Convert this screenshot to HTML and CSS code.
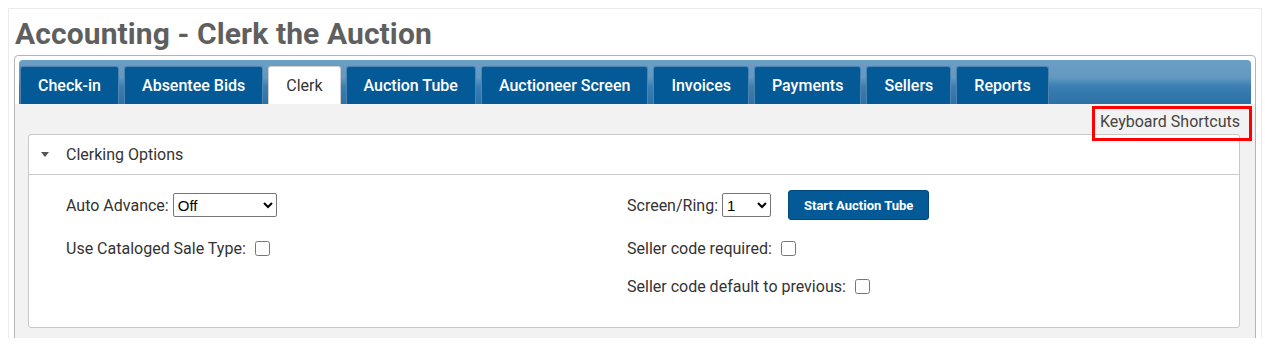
FILE: index.html
```html
<!DOCTYPE html>
<html lang="en">
<head>
    <meta charset="UTF-8">
    <meta name="viewport" content="width=device-width, initial-scale=1.0">
    <title>Accounting - Clerk the Auction</title>
    <link rel="stylesheet" href="styles.css">
</head>
<body>
    <div class="page">
        <h1>Accounting - Clerk the Auction</h1>
        <div class="tabs">
            <div class="tab-bar">
                <ul class="tab-nav">
                    <li><a href="#">Check-in</a></li>
                    <li><a href="#">Absentee Bids</a></li>
                    <li class="active"><a href="#">Clerk</a></li>
                    <li><a href="#">Auction Tube</a></li>
                    <li><a href="#">Auctioneer Screen</a></li>
                    <li><a href="#">Invoices</a></li>
                    <li><a href="#">Payments</a></li>
                    <li><a href="#">Sellers</a></li>
                    <li><a href="#">Reports</a></li>
                </ul>
            </div>
            <div class="tab-panel">
                <div class="shortcuts">
                    <a href="#" class="shortcuts-link">Keyboard Shortcuts</a>
                </div>
                <div class="options">
                    <div class="options-head">
                        <span class="caret"></span>
                        Clerking Options
                    </div>
                    <div class="options-body">
                        <div class="field">
                            <label for="auto-advance">Auto Advance:</label>
                            <select id="auto-advance" class="select-wide">
                                <option>Off</option>
                                <option>On</option>
                            </select>
                        </div>
                        <div class="field">
                            <label for="ring">Screen/Ring:</label>
                            <select id="ring" class="select-small">
                                <option>1</option>
                                <option>2</option>
                            </select>
                            <button class="btn">Start Auction Tube</button>
                        </div>
                        <div class="field">
                            <label for="cataloged">Use Cataloged Sale Type:</label>
                            <input type="checkbox" id="cataloged">
                        </div>
                        <div class="field">
                            <label for="seller-req">Seller code required:</label>
                            <input type="checkbox" id="seller-req">
                        </div>
                        <div class="field"></div>
                        <div class="field">
                            <label for="seller-prev">Seller code default to previous:</label>
                            <input type="checkbox" id="seller-prev">
                        </div>
                    </div>
                </div>
            </div>
        </div>
    </div>
</body>
</html>
```

FILE: styles.css
```css
body {
    margin: 8px 3px 8px 8px;
    font-family: Roboto, "Liberation Sans", Arial, sans-serif;
    font-size: 16px;
    color: #333333;
    background-color: #ffffff;
}
.page {
    box-sizing: border-box;
    height: 330px;
    border: 1px solid #ebebeb;
    border-bottom: none;
    padding: 8px 5px 0 5px;
    overflow: hidden;
}
h1 {
    margin: 0 0 4px 1px;
    font-size: 30px;
    line-height: 34px;
    font-weight: bold;
    letter-spacing: 0.1px;
    color: #5f5f5f;
}
.tabs {
    border: 1px solid #b5b5b5;
    border-radius: 4px;
    background-color: #ffffff;
}
.tab-bar {
    padding: 4px 4px 0 4px;
}
.tab-nav {
    list-style: none;
    margin: 0;
    padding: 6px 0 0 1px;
    display: flex;
    gap: 5px;
    border-radius: 4px 4px 0 0;
    background: linear-gradient(#6c9fc6 0%, #6398c0 40%, #3a7fb3 60%, #2c70a6 100%);
}
.tab-nav li a {
    display: block;
    height: 37px;
    line-height: 37px;
    padding: 0 17px;
    background-color: #035a97;
    border: 1px solid #4f83b0;
    border-bottom: none;
    border-radius: 3px 3px 0 0;
    color: #ffffff;
    font-weight: 500;
    text-decoration: none;
}
.tab-nav li.active a {
    background-color: #ffffff;
    border-color: #d0d0d0;
    color: #333333;
    font-weight: normal;
}
.tab-panel {
    background-color: #f2f2f2;
    padding: 8px 15px 20px 13px;
}
.shortcuts {
    text-align: right;
    line-height: 19px;
    margin-bottom: 3px;
}
.shortcuts-link {
    position: relative;
    color: #444444;
    text-decoration: none;
}
.shortcuts-link::after {
    content: "";
    position: absolute;
    left: -8px;
    right: -12px;
    top: -6px;
    bottom: -10px;
    border: 3px solid #ff0000;
}
.options {
    border: 1px solid #c8c8c8;
    border-radius: 3px;
    background-color: #ffffff;
}
.options-head {
    display: flex;
    align-items: center;
    height: 39px;
    padding-left: 12px;
    border-bottom: 1px solid #cccccc;
    color: #333333;
}
.caret {
    width: 0;
    height: 0;
    border-left: 4px solid transparent;
    border-right: 4px solid transparent;
    border-top: 5px solid #555555;
    margin-right: 17px;
}
.options-body {
    display: grid;
    grid-template-columns: 561px 1fr;
    row-gap: 19px;
    padding: 15px 37px 31px 37px;
}
.field {
    display: flex;
    align-items: center;
    min-height: 19px;
}
.field:first-child {
    min-height: 30px;
}
select {
    height: 24px;
    margin-left: 4px;
    font-family: "Liberation Sans", Arial, sans-serif;
    font-size: 15px;
    color: #000000;
    border: 1px solid #767676;
    border-radius: 2px;
    background-color: #ffffff;
}
.select-wide {
    width: 104px;
}
.select-small {
    width: 49px;
}
.btn {
    margin-left: 17px;
    height: 30px;
    padding: 0 15px;
    background-color: #035a97;
    border: 1px solid #024a7d;
    border-radius: 3px;
    color: #ffffff;
    font-family: Roboto, "Liberation Sans", Arial, sans-serif;
    font-size: 13px;
    font-weight: bold;
}
input[type="checkbox"] {
    width: 15px;
    height: 15px;
    margin: 0 0 0 9px;
}
```
